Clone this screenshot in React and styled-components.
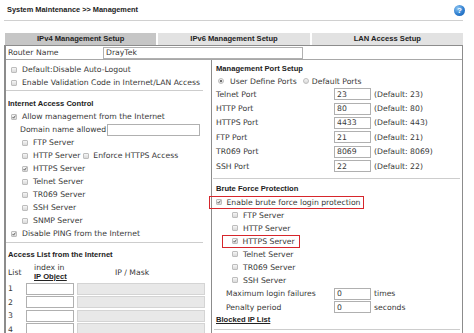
import React from "react";
import styled, { createGlobalStyle } from "styled-components";

const GlobalStyle = createGlobalStyle`
  html, body {
    margin: 0;
    padding: 0;
    background: #fff;
  }
  body {
    font-family: "DejaVu Sans", Verdana, sans-serif;
    font-size: 7.7px;
    color: #383838;
    overflow: hidden;
  }
  * {
    box-sizing: border-box;
  }
`;

const Page = styled.div`
  width: 459px;
  margin-left: 4px;
`;

const TitleBar = styled.div`
  display: flex;
  align-items: center;
  justify-content: space-between;
  height: 21px;
  padding: 0 0 2px 3px;
  border-bottom: 1px solid #d0d0d0;
`;

const Title = styled.div`
  font-family: "Liberation Sans", Arial, sans-serif;
  font-weight: bold;
  font-size: 7.4px;
  color: #222;
`;

const Help = styled.span`
  width: 11px;
  height: 11px;
  margin: 3px -2px 0 0;
  border-radius: 50%;
  background: radial-gradient(circle at 35% 30%, #8cc4f2, #2f7fd0 55%, #1b5fae);
  color: #fff;
  font-family: "Liberation Sans", Arial, sans-serif;
  font-weight: bold;
  font-size: 8px;
  line-height: 11px;
  text-align: center;
`;

const Tabs = styled.div`
  display: grid;
  grid-template-columns: repeat(3, 1fr);
  gap: 2px;
  margin: 12px 0 0 1px;
`;

const Tab = styled.div`
  height: 12px;
  line-height: 12px;
  text-align: center;
  font-family: "Liberation Sans", Arial, sans-serif;
  font-weight: bold;
  font-size: 7.6px;
  color: #222;
  background: ${(p) => (p.$active ? "#c6c6c6" : "#e2e2e2")};
`;

const Panel = styled.div`
  border: 1px solid #8c8c8c;
  border-left-width: 2px;
  border-bottom: none;
`;

const NameRow = styled.div`
  display: flex;
  align-items: center;
  height: 14px;
  border-bottom: 1px solid #a8a8a8;
`;

const NameLabel = styled.span`
  width: 97px;
  padding-left: 2px;
`;

const Columns = styled.div`
  display: grid;
  grid-template-columns: 205px 1fr;
`;

const Column = styled.div`
  padding: 3px 4px 0 ${(p) => (p.$right ? 4 : 2)}px;
  border-left: ${(p) => (p.$right ? "1px solid #8c8c8c" : "none")};
`;

const Heading = styled.div`
  height: ${(p) => p.$h || 12}px;
  line-height: ${(p) => p.$h || 12}px;
  margin-top: ${(p) => p.$mt || 0}px;
  font-family: "Liberation Sans", Arial, sans-serif;
  font-weight: bold;
  font-size: 7.6px;
  color: #222;
  text-decoration: ${(p) => (p.$link ? "underline" : "none")};
`;

const Divider = styled.div`
  height: 1px;
  background: #cdcdcd;
  margin: ${(p) => p.$mt || 0}px ${(p) => p.$mr || 0}px 0 ${(p) => p.$ml || 0}px;
`;

const Row = styled.div`
  display: flex;
  align-items: center;
  height: ${(p) => p.$h || 13}px;
  padding-left: ${(p) => p.$indent || 0}px;
  margin-top: ${(p) => p.$mt || 0}px;
  white-space: nowrap;
`;

const Box = styled.span`
  display: flex;
  align-items: center;
  justify-content: center;
  flex: none;
  width: 6px;
  height: 6px;
  margin-right: ${(p) => p.$gap ?? 5}px;
  border: 1px solid #bdbdbd;
  border-radius: ${(p) => (p.$round ? "50%" : "1px")};
  background: linear-gradient(#f6f6f6, #d9d9d9);
`;

const Dot = styled.span`
  width: 2px;
  height: 2px;
  border-radius: 50%;
  background: #444;
`;

const Highlight = styled.span`
  display: inline-flex;
  align-items: center;
  height: ${(p) => p.$h}px;
  margin-left: -${(p) => p.$pad}px;
  padding: 0 ${(p) => p.$right}px 0 ${(p) => p.$pad - 1.5}px;
  border: 1.5px solid #d6262c;
`;

const Field = styled.input`
  width: ${(p) => p.$w}px;
  height: 12px;
  margin: 0;
  padding: 0 2px;
  border: 1px solid ${(p) => (p.$off ? "#d4d4d4" : "#b0b0b0")};
  background: ${(p) => (p.$off ? "#e8e8e8" : "#fff")};
  font-family: "DejaVu Sans", Verdana, sans-serif;
  font-size: 7.7px;
  color: #383838;
  outline: none;
`;

const Label = styled.span`
  flex: none;
  width: ${(p) => (p.$w ? `${p.$w}px` : "auto")};
  margin-left: ${(p) => p.$ml || 0}px;
`;

const Hint = styled.span`
  margin-left: 3px;
`;

const AccessHead = styled.div`
  display: grid;
  grid-template-columns: 18px 51px 1fr;
  align-items: center;
  height: 20px;
  margin-top: 1px;
  line-height: 9px;
`;

const AccessRow = styled.div`
  display: grid;
  grid-template-columns: 18px 51px 1fr;
  align-items: center;
  height: 13.5px;
`;

const IndexHead = styled.div`
  padding-left: 8px;
`;

const Link = styled.span`
  font-family: "Liberation Sans", Arial, sans-serif;
  font-weight: bold;
  font-size: 7.6px;
  color: #222;
  text-decoration: underline;
`;

const MaskHead = styled.div`
  text-align: center;
  padding-right: 20px;
`;

function Check({ checked, gap }) {
  return (
    <Box $gap={gap}>
      {checked && (
        <svg width="6" height="6" viewBox="0 0 6 6">
          <path d="M0.8 3.1 L2.4 4.7 L5.2 0.9" fill="none" stroke="#333" strokeWidth="1.1" />
        </svg>
      )}
    </Box>
  );
}

function CheckRow({ text, checked, indent, h }) {
  return (
    <Row $indent={indent} $h={h}>
      <Check checked={checked} />
      <span>{text}</span>
    </Row>
  );
}

const ports = [
  ["Telnet Port", "23", "(Default: 23)"],
  ["HTTP Port", "80", "(Default: 80)"],
  ["HTTPS Port", "4433", "(Default: 443)"],
  ["FTP Port", "21", "(Default: 21)"],
  ["TR069 Port", "8069", "(Default: 8069)"],
  ["SSH Port", "22", "(Default: 22)"],
];

export default function App() {
  return (
    <Page>
      <GlobalStyle />
      <TitleBar>
        <Title>System Maintenance &gt;&gt; Management</Title>
        <Help>?</Help>
      </TitleBar>

      <Tabs>
        <Tab $active>IPv4 Management Setup</Tab>
        <Tab>IPv6 Management Setup</Tab>
        <Tab>LAN Access Setup</Tab>
      </Tabs>

      <Panel>
        <NameRow>
          <NameLabel>Router Name</NameLabel>
          <Field $w={200} defaultValue="DrayTek" readOnly />
        </NameRow>

        <Columns>
          <Column>
            <CheckRow indent={3} text="Default:Disable Auto-Logout" />
            <CheckRow indent={3} text="Enable Validation Code in Internet/LAN Access" />
            <Divider $mt={1} $ml={-2} $mr={4} />

            <Heading $mt={7}>Internet Access Control</Heading>
            <CheckRow indent={3} checked text="Allow management from the Internet" />
            <Row $indent={12}>
              <Label $w={87}>Domain name allowed</Label>
              <Field $w={93} readOnly />
            </Row>
            <CheckRow indent={14} text="FTP Server" />
            <Row $indent={14}>
              <Check />
              <span>HTTP Server</span>
              <Label $ml={3} />
              <Check gap={4} />
              <span>Enforce HTTPS Access</span>
            </Row>
            <CheckRow indent={14} checked text="HTTPS Server" />
            <CheckRow indent={14} text="Telnet Server" />
            <CheckRow indent={14} text="TR069 Server" />
            <CheckRow indent={14} text="SSH Server" />
            <CheckRow indent={14} text="SNMP Server" />
            <CheckRow indent={3} checked text="Disable PING from the Internet" />
            <Divider $mt={2} $ml={-2} $mr={4} />

            <Heading $mt={6}>Access List from the Internet</Heading>
            <AccessHead>
              <span>List</span>
              <IndexHead>
                index in
                <br />
                <Link>IP Object</Link>
              </IndexHead>
              <MaskHead>IP / Mask</MaskHead>
            </AccessHead>
            {[1, 2, 3, 4].map((n) => (
              <AccessRow key={n}>
                <span>{n}</span>
                <Field $w={48} readOnly />
                <Field $w={128} $off readOnly />
              </AccessRow>
            ))}
          </Column>

          <Column $right>
            <Heading>Management Port Setup</Heading>
            <Row $h={12} $indent={2}>
              <Box $round $gap={6}>
                <Dot />
              </Box>
              <span>User Define Ports</span>
              <Label $ml={6} />
              <Box $round $gap={3} />
              <span>Default Ports</span>
            </Row>
            {ports.map(([name, value, hint]) => (
              <Row key={name} $h={14.4}>
                <Label $w={118}>{name}</Label>
                <Field $w={37} defaultValue={value} readOnly />
                <Hint>{hint}</Hint>
              </Row>
            ))}
            <Divider $mt={4.5} $ml={-3} $mr={-2} />

            <Heading $mt={4}>Brute Force Protection</Heading>
            <Row $mt={1}>
              <Highlight $h={13} $pad={7.5} $right={3}>
                <Check checked />
                <span>Enable brute force login protection</span>
              </Highlight>
            </Row>
            <CheckRow indent={16} text="FTP Server" />
            <CheckRow indent={16} text="HTTP Server" />
            <Row $indent={16}>
              <Highlight $h={12.5} $pad={10} $right={4}>
                <Check checked />
                <span>HTTPS Server</span>
              </Highlight>
            </Row>
            <CheckRow indent={16} text="Telnet Server" />
            <CheckRow indent={16} text="TR069 Server" />
            <CheckRow indent={16} text="SSH Server" />
            <Row $h={13.5} $indent={10}>
              <Label $w={108}>Maximum login failures</Label>
              <Field $w={37} defaultValue="0" readOnly />
              <Hint>times</Hint>
            </Row>
            <Row $h={13.5} $indent={10}>
              <Label $w={108}>Penalty period</Label>
              <Field $w={37} defaultValue="0" readOnly />
              <Hint>seconds</Hint>
            </Row>
            <Heading $h={11} $link>
              Blocked IP List
            </Heading>
            <Divider $mt={4} $ml={-2} $mr={-2} />
          </Column>
        </Columns>
      </Panel>
    </Page>
  );
}
